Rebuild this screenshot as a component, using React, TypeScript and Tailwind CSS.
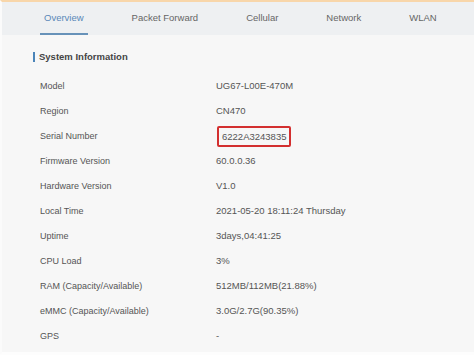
const tabs = ['Overview', 'Packet Forward', 'Cellular', 'Network', 'WLAN'];

const rows: [string, string][] = [
  ['Model', 'UG67-L00E-470M'],
  ['Region', 'CN470'],
  ['Serial Number', '6222A3243835'],
  ['Firmware Version', '60.0.0.36'],
  ['Hardware Version', 'V1.0'],
  ['Local Time', '2021-05-20 18:11:24 Thursday'],
  ['Uptime', '3days,04:41:25'],
  ['CPU Load', '3%'],
  ['RAM (Capacity/Available)', '512MB/112MB(21.88%)'],
  ['eMMC (Capacity/Available)', '3.0G/2.7G(90.35%)'],
  ['GPS', '-'],
];

export default function App() {
  return (
    <div
      className="w-[474px] h-[355px] overflow-hidden bg-[#f7f7f7] border-t-2 border-t-[#f8d6aa] border-l-2 border-l-[#fbfbfb] border-b-[3px] border-b-[#fdfdfd] flex flex-col"
      style={{ fontFamily: '"Liberation Sans", Arial, sans-serif' }}
    >
      <div className="h-[33px] shrink-0 bg-[#eef0f2] flex items-stretch pl-[38px] gap-[40px]">
        {tabs.map((t, i) => (
          <div
            key={t}
            className={
              'px-[4px] pt-[1px] flex items-center text-[9.5px] border-b-[2px] ' +
              (i === 0 ? 'text-[#5a88b8] border-[#6792b9]' : 'text-[#666] border-transparent')
            }
          >
            {t}
          </div>
        ))}
      </div>

      <div className="pl-[31px] mt-[16px] flex items-center h-[12px]">
        <span className="w-[2px] h-[10px] bg-[#4b84b8] mr-[4px]" />
        <span className="text-[9.5px] font-bold text-[#444]">System Information</span>
      </div>

      <div className="mt-[11px] pl-[38px]">
        {rows.map(([k, v]) => (
          <div key={k} className="h-[25px] flex items-center text-[9.5px] text-[#555]">
            <div className="w-[176px] shrink-0 text-[9px]">{k}</div>
            <div className="whitespace-nowrap">
              {k === 'Serial Number' ? (
                <span className="inline-block border-2 border-[#d32f2f] rounded-[2px] px-[3px] py-[3px] ml-[1px] leading-[11px]">
                  {v}
                </span>
              ) : (
                v
              )}
            </div>
          </div>
        ))}
      </div>
    </div>
  );
}
